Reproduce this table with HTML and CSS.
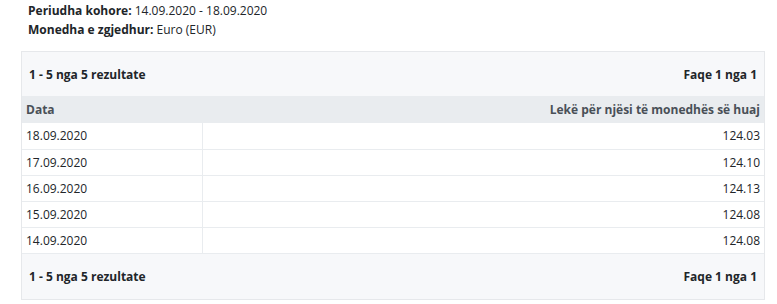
FILE: index.html
```html
<!DOCTYPE html>
<html>
<head>
<meta charset="utf-8">
<link rel="stylesheet" href="styles.css">
</head>
<body>
<div class="info">
  <div class="line"><b>Periudha kohore:</b> 14.09.2020 - 18.09.2020</div>
  <div class="line"><b>Monedha e zgjedhur:</b> Euro (EUR)</div>
</div>
<div class="box">
  <div class="bar">
    <span>1 - 5 nga 5 rezultate</span>
    <span>Faqe 1 nga 1</span>
  </div>
  <table class="rates">
    <thead>
      <tr><th class="c-date">Data</th><th class="c-val">Lekë për njësi të monedhës së huaj</th></tr>
    </thead>
    <tbody>
      <tr><td class="c-date">18.09.2020</td><td class="c-val">124.03</td></tr>
      <tr><td class="c-date">17.09.2020</td><td class="c-val">124.10</td></tr>
      <tr><td class="c-date">16.09.2020</td><td class="c-val">124.13</td></tr>
      <tr><td class="c-date">15.09.2020</td><td class="c-val">124.08</td></tr>
      <tr><td class="c-date">14.09.2020</td><td class="c-val">124.08</td></tr>
    </tbody>
  </table>
  <div class="bar bar-foot">
    <span>1 - 5 nga 5 rezultate</span>
    <span>Faqe 1 nga 1</span>
  </div>
</div>
</body>
</html>
```
FILE: styles.css
```css
* { box-sizing: border-box; }
body {
  margin: 0;
  font-family: "Open Sans", "Noto Sans", sans-serif;
  font-size: 12px;
  color: #212529;
  background: #fff;
}
.info {
  padding: 1px 0 0 28px;
  height: 51px;
}
.line {
  line-height: 19px;
}
.info b { font-weight: 700; }
.box {
  margin-left: 21px;
  width: 744px;
  border: 1px solid #e6e8eb;
}
.bar {
  display: flex;
  justify-content: space-between;
  align-items: center;
  height: 44px;
  padding: 0 7px 0 7px;
  background: #f7f8fa;
  font-weight: 700;
}
.bar-foot { height: 45px; }
.rates {
  width: 100%;
  border-collapse: collapse;
}
.rates th {
  background: #e9ecef;
  color: #495057;
  font-weight: 700;
  height: 27px;
  padding: 0 4px;
}
.rates td {
  height: 26px;
  padding: 0 4px;
  border-bottom: 1px solid #e9ecef;
}
.rates td.c-date {
  width: 180px;
  border-right: 1px solid #e9ecef;
}
.c-date { text-align: left; }
.c-val { text-align: right; }
```
